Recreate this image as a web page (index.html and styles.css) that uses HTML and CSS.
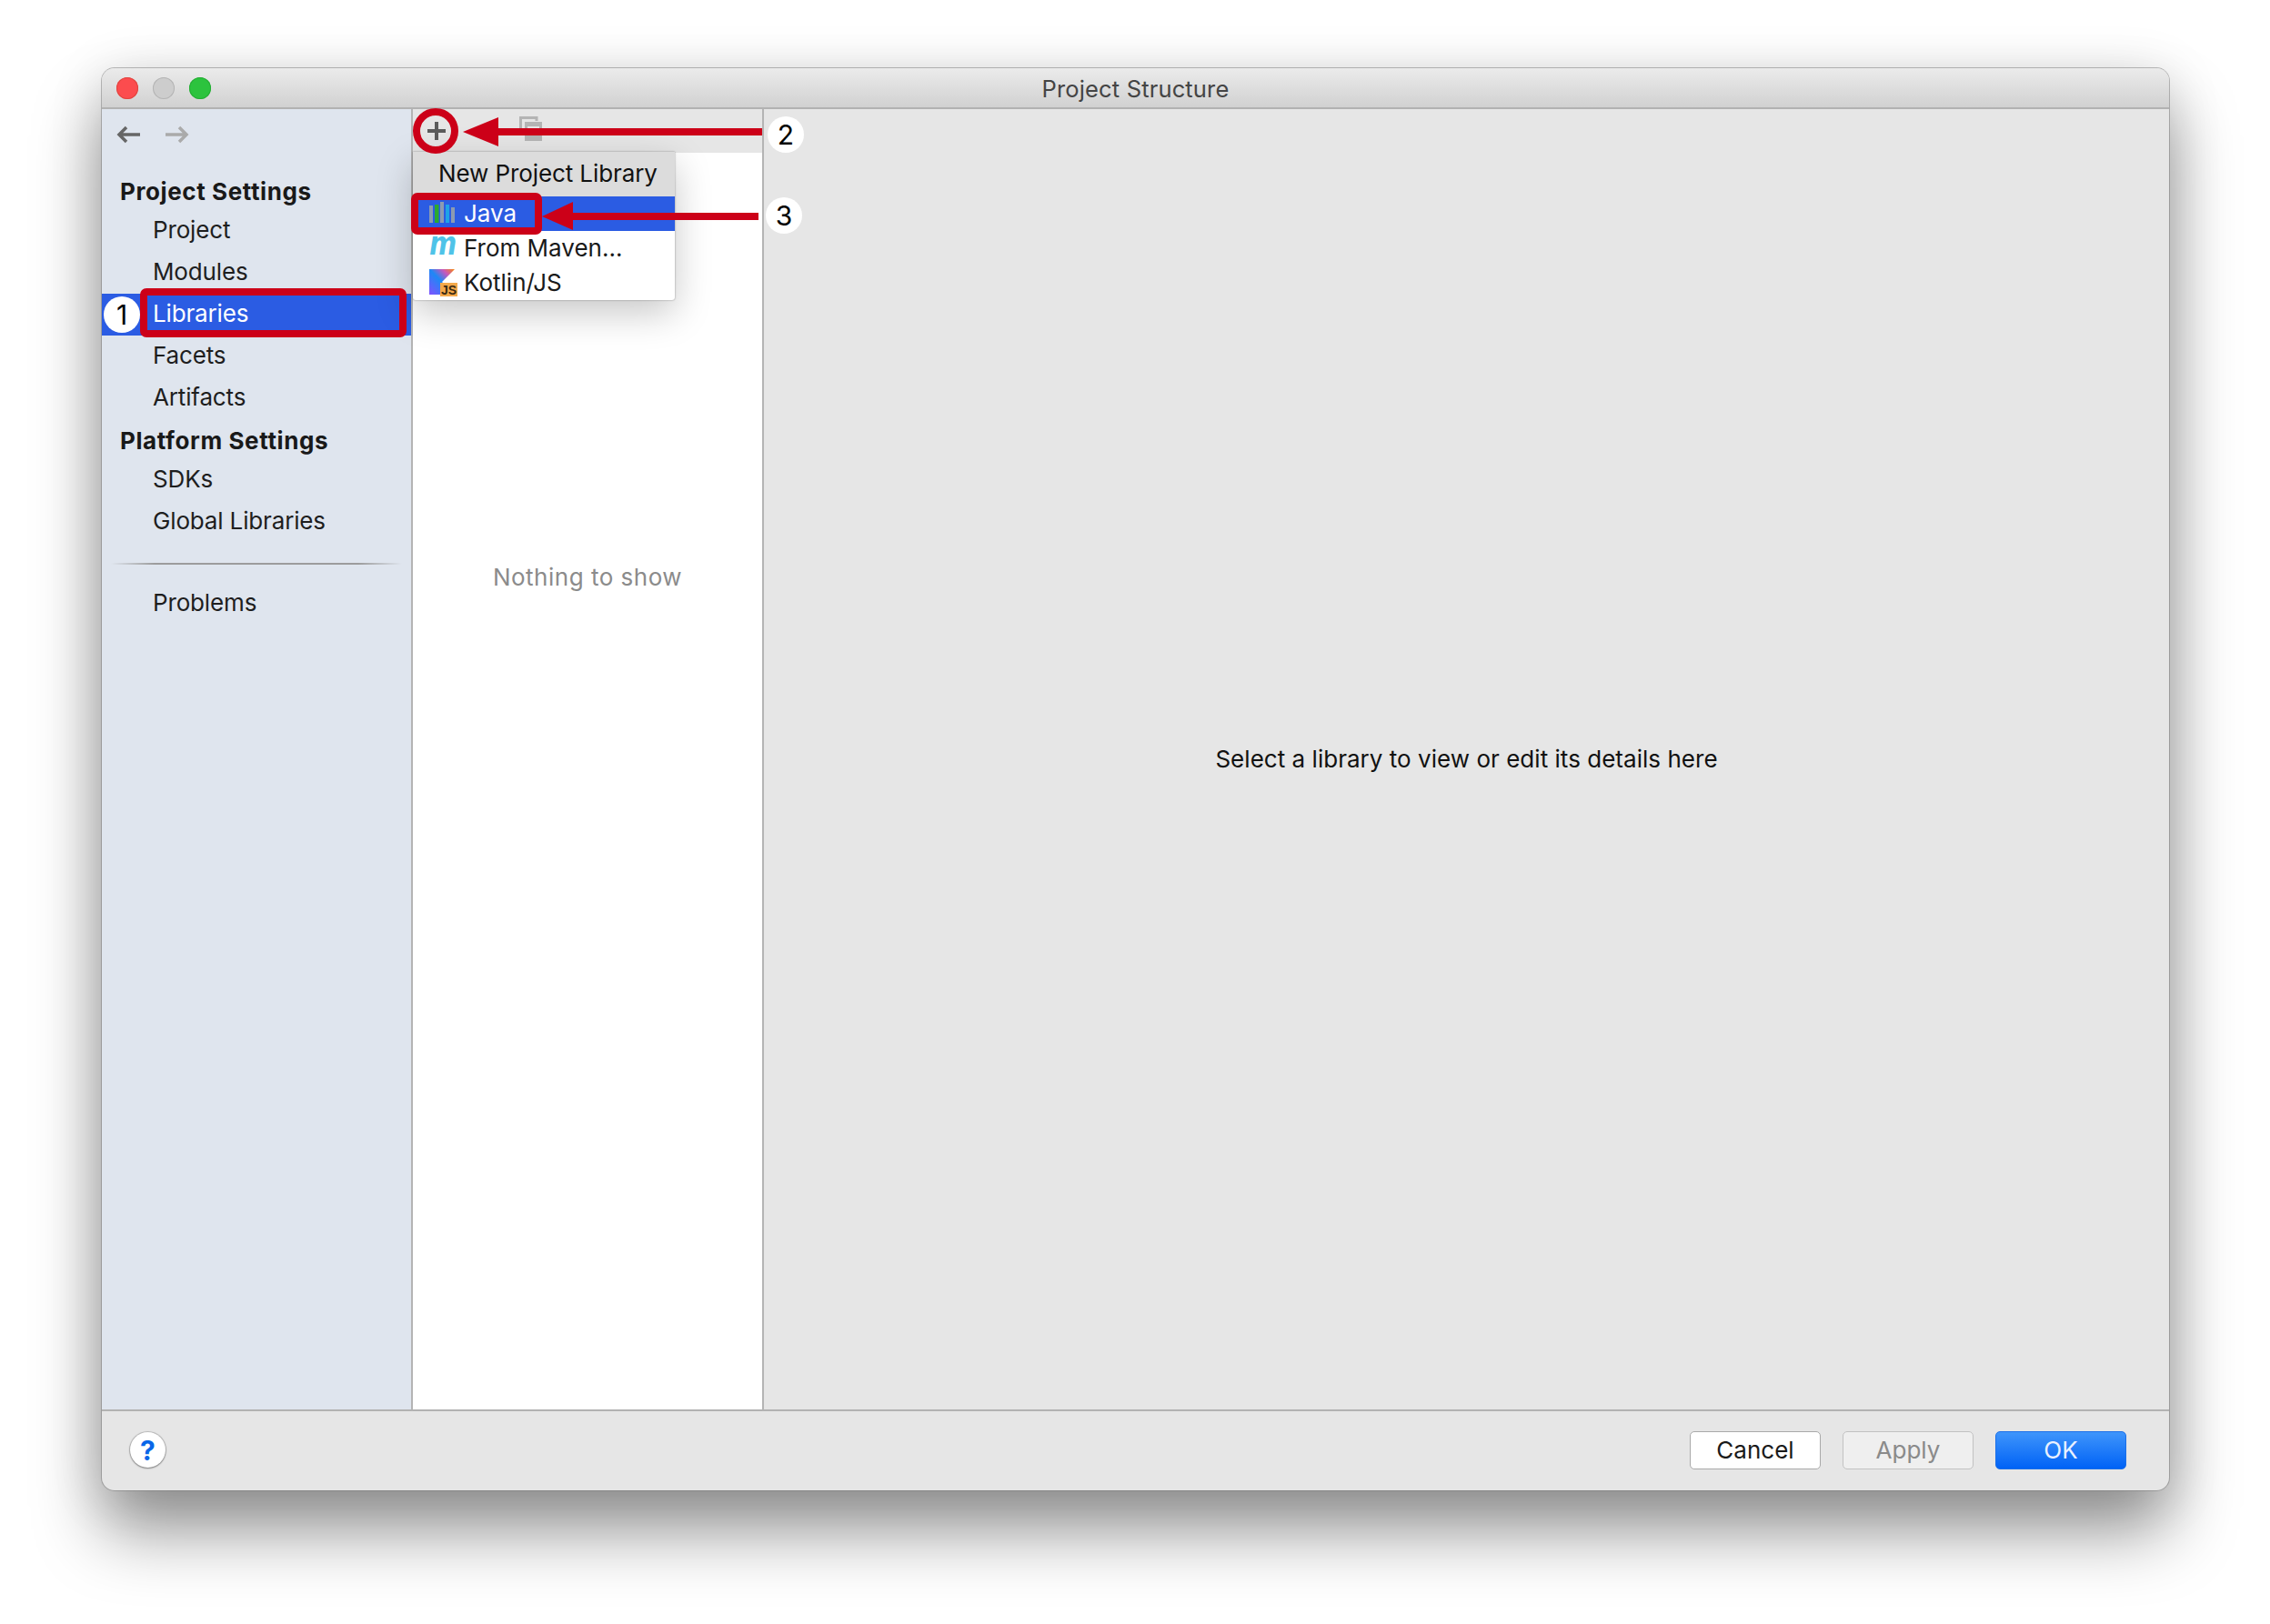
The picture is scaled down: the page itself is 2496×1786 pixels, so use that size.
FILE: index.html
```html
<!DOCTYPE html>
<html lang="en">
<head>
<meta charset="utf-8">
<title>Project Structure</title>
<link rel="stylesheet" href="styles.css">
</head>
<body>
<div class="window">
  <header class="titlebar">
    <div class="lights"><span class="light red"></span><span class="light gray"></span><span class="light green"></span></div>
    <div class="title">Project Structure</div>
  </header>
  <div class="main">
    <aside class="sidebar">
      <div class="nav">
        <svg class="nav-icon" width="28" height="22" viewBox="0 0 28 22"><path d="M27 11H4M12 3l-8 8 8 8" fill="none" stroke="#666" stroke-width="3.5"/></svg>
        <svg class="nav-icon" width="28" height="22" viewBox="0 0 28 22"><path d="M1 11h23M16 3l8 8-8 8" fill="none" stroke="#aaa" stroke-width="3.5"/></svg>
      </div>
      <div class="heading first">Project Settings</div>
      <div class="item">Project</div>
      <div class="item">Modules</div>
      <div class="item selected">Libraries</div>
      <div class="item">Facets</div>
      <div class="item">Artifacts</div>
      <div class="heading second">Platform Settings</div>
      <div class="item">SDKs</div>
      <div class="item">Global Libraries</div>
      <div class="rule"></div>
      <div class="item">Problems</div>
    </aside>
    <section class="middle">
      <div class="toolbar">
        <svg width="24" height="24" viewBox="0 0 24 24" class="plus"><path d="M12 2v20M2 12h20" stroke="#5c5c5c" stroke-width="4"/></svg>
        <svg width="26" height="28" viewBox="0 0 26 28" class="copy"><path d="M1.500 20V1.500H19V5" fill="none" stroke="#b4b4b4" stroke-width="3"/><path fill="#b4b4b4" fill-rule="evenodd" d="M6 6h19v21H6zM9 11v9h13v-9z"/></svg>
      </div>
      <div class="list"><span class="empty">Nothing to show</span></div>
      <div class="popup">
        <div class="popup-head">New Project Library</div>
        <div class="popup-row active">
          <svg class="ico" width="30" height="26" viewBox="0 0 30 26"><path fill="#8c9bb0" d="M0 5h4v19H0zM12 1h4v23h-4zM24 7h4v17h-4z"/><path fill="#2aa92e" d="M6 4h4.500v20H6z"/><path fill="#1fa3e6" d="M18 4h4v20h-4z"/></svg>
          <span>Java</span>
        </div>
        <div class="popup-row">
          <span class="ico maven">m</span>
          <span>From Maven...</span>
        </div>
        <div class="popup-row">
          <span class="ico kotlin">
            <svg width="28" height="28" viewBox="0 0 28 28"><defs><linearGradient id="kt" x1="0" y1="1" x2="1" y2="0"><stop offset="0" stop-color="#7f52ff"/><stop offset=".5" stop-color="#1e88f5"/><stop offset=".75" stop-color="#c757bc"/><stop offset="1" stop-color="#f88909"/></linearGradient></defs><path fill="url(#kt)" d="M0 0h28L14 14l14 14H0z"/></svg>
            <span class="js">JS</span>
          </span>
          <span>Kotlin/JS</span>
        </div>
      </div>
    </section>
    <section class="detail">Select a library to view or edit its details here</section>
  </div>
  <footer class="footer">
    <div class="help">?</div>
    <div class="buttons">
      <div class="btn">Cancel</div>
      <div class="btn disabled">Apply</div>
      <div class="btn primary">OK</div>
    </div>
  </footer>
</div>
<svg class="marks" width="2496" height="1786" viewBox="0 0 2496 1786">
  <g fill="none" stroke="#cc0018" stroke-width="8">
    <circle cx="479" cy="144" r="21"/>
    <rect x="158" y="321" width="285" height="46" rx="3"/>
    <rect x="456" y="216" width="136" height="38" rx="3"/>
  </g>
  <g fill="#cc0018">
    <path d="M838 141H548v-12L509 145l39 16v-12h290z"/>
    <path d="M834 234H630v-12L596 238l34 15v-11h204z"/>
  </g>
</svg>
<div class="badge b1">1</div>
<div class="badge b2">2</div>
<div class="badge b3">3</div>
</body>
</html>
```
FILE: styles.css
```css
* { box-sizing: border-box; }
html, body { margin: 0; padding: 0; }
body {
  position: relative;
  width: 2496px;
  height: 1786px;
  padding: 75px 112px 0;
  background: #fff;
  font-family: Inter, "Liberation Sans", sans-serif;
  font-size: 26px;
  color: #1c1c1c;
  overflow: hidden;
}
.window {
  width: 2273px;
  height: 1564px;
  display: flex;
  flex-direction: column;
  border-radius: 14px;
  background: #e6e6e6;
  box-shadow: 0 0 0 1px rgba(120,120,120,.5), 0 46px 75px rgba(0,0,0,.4), 0 8px 60px rgba(0,0,0,.14);
}
.titlebar {
  position: relative;
  height: 45px;
  flex: none;
  display: flex;
  align-items: center;
  justify-content: center;
  padding-top: 2px;
  background: linear-gradient(#ebebeb, #d1d1d1);
  border-bottom: 2px solid #b2b2b2;
  border-radius: 14px 14px 0 0;
}
.lights { position: absolute; left: 16px; top: 10px; display: flex; gap: 16px; }
.light { width: 24px; height: 24px; border-radius: 50%; }
.red { background: #fc4c4e; box-shadow: inset 0 0 0 1px #e0443e; }
.gray { background: #cdcdcd; box-shadow: inset 0 0 0 1px #b4b4b4; }
.green { background: #2cc33e; box-shadow: inset 0 0 0 1px #25ad34; }
.title { color: #444; font-size: 25.500px; letter-spacing: .15px; }
.main { flex: 1; display: flex; min-height: 0; border-bottom: 2px solid #b2b2b2; }
.sidebar {
  width: 342px;
  flex: none;
  background: #dfe5ee;
  border-right: 2px solid #b4b4b4;
}
.nav { height: 71px; padding: 17px 0 0 15px; display: flex; gap: 26px; align-items: flex-start; }
.heading { padding-left: 20px; font-weight: 700; letter-spacing: .6px; display: flex; align-items: center; color: #191919; }
.first { height: 40px; padding-bottom: 2px; }
.second { height: 44px; padding-top: 3px; }
.item { height: 46px; padding: 0 0 3px 56px; display: flex; align-items: center; color: #1e1e1e; letter-spacing: -.15px; }
.item.selected { background: #2b5ce3; color: #fff; }
.rule { height: 2px; margin: 22px 10px 20px; background: linear-gradient(90deg, rgba(150,150,150,0), #9c9c9c 15%, #9c9c9c 85%, rgba(150,150,150,0)); }
.middle {
  position: relative;
  width: 386px;
  flex: none;
  display: flex;
  flex-direction: column;
  background: #fff;
  border-right: 2px solid #b4b4b4;
}
.toolbar { height: 48px; flex: none; background: #e6e6e6; position: relative; display: flex; align-items: center; padding-left: 14px; gap: 92px; }
.plus { flex: none; }
.copy { flex: none; margin-top: -4px; position: relative; left: -13px; }
.list { flex: 1; display: flex; align-items: center; justify-content: center; padding-bottom: 450px; }
.empty { color: #8b8b8b; letter-spacing: .5px; }
.popup {
  position: absolute;
  left: 0;
  top: 47px;
  width: 288px;
  background: #fff;
  box-shadow: 0 0 2px rgba(0,0,0,.45), 0 14px 40px rgba(0,0,0,.22);
  border-radius: 0 0 3px 3px;
}
.popup-head { height: 49px; padding: 0 0 2px 28px; display: flex; align-items: center; background: #dcdcdc; color: #111; letter-spacing: -.1px; }
.popup-row { height: 38px; padding: 0 0 2px 18px; display: flex; align-items: center; gap: 8px; color: #1a1a1a; }
.popup-row.active { background: #2b5ce3; color: #fff; }
.ico { width: 30px; height: 28px; flex: none; }
.maven {
  display: block;
  font: italic 700 29px/24px "DejaVu Sans", sans-serif;
  color: #4fc3e8;
  transform: scaleY(1.2);
  transform-origin: 50% 70%;
}
.kotlin { position: relative; display: block; }
.js {
  position: absolute;
  left: 12px;
  top: 15px;
  width: 19px;
  height: 15px;
  background: #f4a94a;
  color: #3a2a12;
  font: 700 14px/16px "Liberation Sans", sans-serif;
  text-align: center;
}
.detail { flex: 1; display: flex; align-items: center; justify-content: center; padding-bottom: 2px; background: #e6e6e6; color: #111; letter-spacing: .03px; }
.footer { height: 87px; flex: none; display: flex; align-items: center; justify-content: space-between; padding: 0 47px 2px 31px; border-radius: 0 0 14px 14px; }
.help {
  width: 39px;
  height: 39px;
  border-radius: 50%;
  background: #fff;
  box-shadow: 0 0 1px 1px rgba(0,0,0,.2), 0 1px 2px rgba(0,0,0,.3);
  color: #0a66e8;
  font-weight: 700;
  font-size: 30px;
  display: flex;
  align-items: center;
  justify-content: center;
}
.buttons { display: flex; gap: 24px; }
.btn {
  width: 144px;
  height: 42px;
  border-radius: 5px;
  display: flex;
  align-items: center;
  justify-content: center;
  background: #fff;
  border: 1px solid #a9a9a9;
  color: #1a1a1a;
}
.btn.disabled { background: #efefef; border-color: #c2c2c2; color: #8a8a8a; }
.btn.primary { background: linear-gradient(#3f95fb, #0062f6); border-color: #1a6fe8; color: #e8f1ff; }
.marks { position: absolute; left: 0; top: 0; pointer-events: none; }
.badge {
  position: absolute;
  width: 40px;
  height: 40px;
  border-radius: 50%;
  background: #fff;
  color: #000;
  font-size: 30px;
  display: flex;
  align-items: center;
  justify-content: center;
}
.b1 { left: 114px; top: 326px; }
.b2 { left: 844px; top: 128px; }
.b3 { left: 842px; top: 217px; }
```
